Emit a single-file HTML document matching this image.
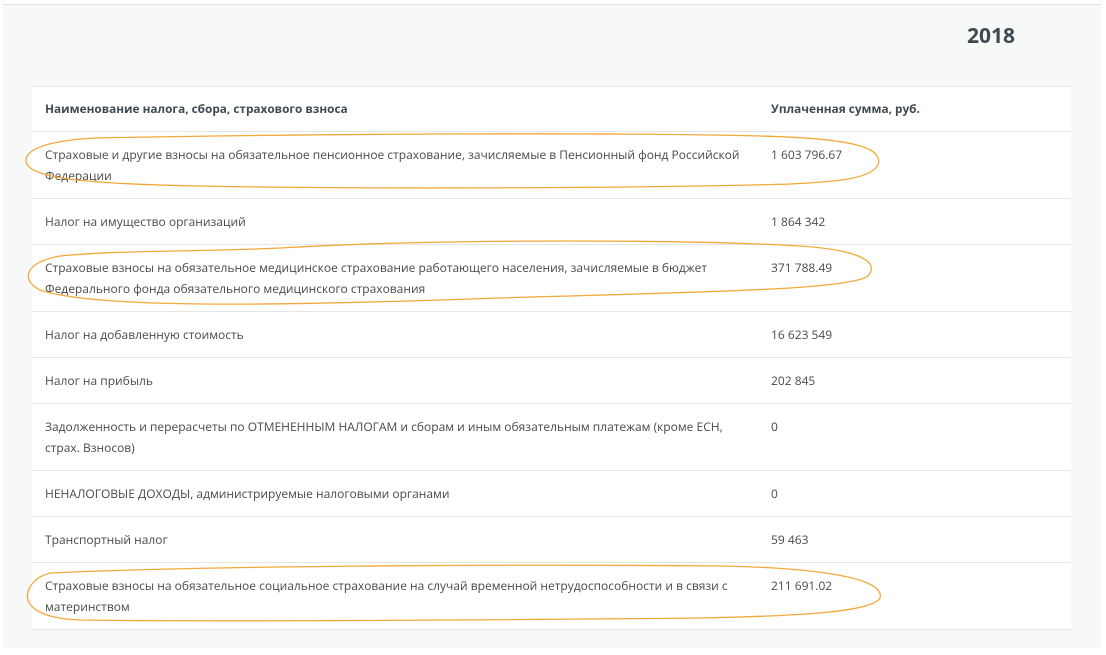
<!DOCTYPE html>
<html><head><meta charset="utf-8"><style>
body{margin:0;width:1106px;height:655px;background:#fff;font-family:"Open Sans","Liberation Sans","DejaVu Sans",sans-serif;color:#4a4a4a;overflow:hidden;position:relative}
.panel{position:absolute;left:3px;top:4px;width:1098px;height:643px;background:#f7f8f8;border-top:1px solid #e0e0e0}
.year{position:absolute;left:967px;top:22px;font-size:21px;font-weight:bold;color:#3e4a52}
.tbl{position:absolute;left:32px;top:86px;width:1039px;background:#fff}
.row{position:absolute;left:0;width:1039px;border-top:1px solid #e6e6e6;font-size:12px;line-height:21px}
.c1{position:absolute;left:13px;top:12px;width:715px}
.c2{position:absolute;left:739px;top:12px}
.h{font-weight:bold;color:#3e4a52;font-size:11.8px}
svg{position:absolute;left:0;top:0}
</style></head><body>
<div class="panel"></div>
<div class="year">2018</div>
<div class="tbl" style="height:543px;border-bottom:1px solid #e6e6e6">
<div class="row" style="top:0;height:45px"><div class="c1 h">Наименование налога, сбора, страхового взноса</div><div class="c2 h">Уплаченная сумма, руб.</div></div>
<div class="row" style="top:45px;height:67px"><div class="c1">Страховые и другие взносы на обязательное пенсионное страхование, зачисляемые в Пенсионный фонд Российской Федерации</div><div class="c2">1 603 796.67</div></div>
<div class="row" style="top:112px;height:46px"><div class="c1">Налог на имущество организаций</div><div class="c2">1 864 342</div></div>
<div class="row" style="top:158px;height:67px"><div class="c1">Страховые взносы на обязательное медицинское страхование работающего населения, зачисляемые в бюджет Федерального фонда обязательного медицинского страхования</div><div class="c2">371 788.49</div></div>
<div class="row" style="top:225px;height:46px"><div class="c1">Налог на добавленную стоимость</div><div class="c2">16 623 549</div></div>
<div class="row" style="top:271px;height:46px"><div class="c1">Налог на прибыль</div><div class="c2">202 845</div></div>
<div class="row" style="top:317px;height:67px"><div class="c1">Задолженность и перерасчеты по ОТМЕНЕННЫМ НАЛОГАМ и сборам и иным обязательным платежам (кроме ЕСН, страх. Взносов)</div><div class="c2">0</div></div>
<div class="row" style="top:384px;height:46px"><div class="c1">НЕНАЛОГОВЫЕ ДОХОДЫ, администрируемые налоговыми органами</div><div class="c2">0</div></div>
<div class="row" style="top:430px;height:46px"><div class="c1">Транспортный налог</div><div class="c2">59 463</div></div>
<div class="row" style="top:476px;height:67px"><div class="c1">Страховые взносы на обязательное социальное страхование на случай временной нетрудоспособности и в связи с материнством</div><div class="c2">211 691.02</div></div>
</div>
<svg width="1106" height="655" fill="none" stroke="#f3a93a" stroke-width="1.3">
<path d="M95 138 C300 134 600 132 760 136 C840 138 885 145 878 165 C870 180 830 182 790 184 C700 187 400 190 200 186 C100 184 30 180 26 162 C24 146 60 140 95 138"/>
<path d="M280 248 C450 238 700 240 800 246 C860 250 880 262 868 276 C850 290 700 292 500 298 C300 305 100 310 40 290 C20 280 25 262 60 256 C120 250 200 252 280 248"/>
<path d="M50 573 C200 566 500 564 720 566 C830 568 885 580 880 598 C872 612 800 616 700 618 C500 620 200 622 80 620 C30 618 20 600 32 584 C38 576 45 575 50 573"/>
</svg>
</body></html>
